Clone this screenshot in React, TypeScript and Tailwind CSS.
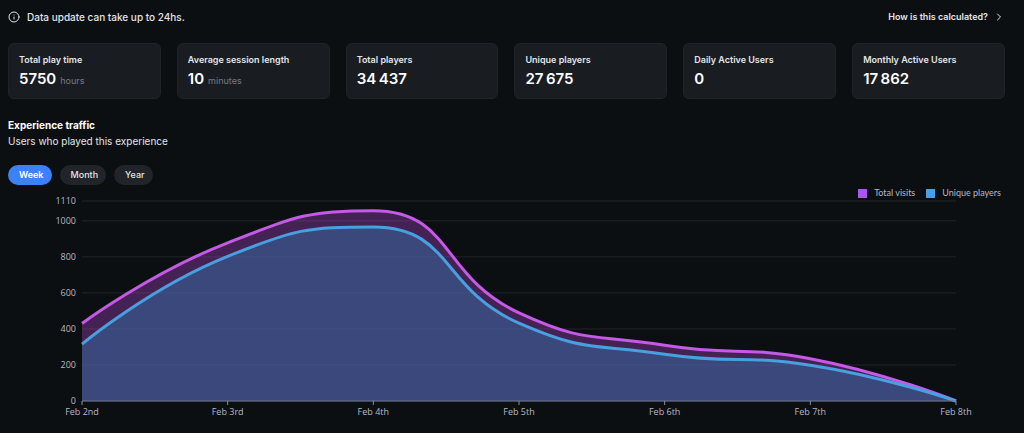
import { useState } from "react";
import { ChevronRight, Info } from "lucide-react";
import clsx from "clsx";

type Point = { x: number; y: number };

const stats = [
  { label: "Total play time", value: "5750", unit: "hours" },
  { label: "Average session length", value: "10", unit: "minutes" },
  { label: "Total players", value: "34\u2009437" },
  { label: "Unique players", value: "27\u2009675" },
  { label: "Daily Active Users", value: "0" },
  { label: "Monthly Active Users", value: "17\u2009862" },
];

const ranges = ["Week", "Month", "Year"];

const days = ["Feb 2nd", "Feb 3rd", "Feb 4th", "Feb 5th", "Feb 6th", "Feb 7th", "Feb 8th"];
const totalVisits = [430, 878, 1056, 489, 309, 235, 0];
const uniquePlayers = [316, 803, 966, 432, 260, 199, 0];

const ticks = [0, 200, 400, 600, 800, 1000, 1110];
const MAX = 1110;

const CHART = { width: 997, height: 218, left: 74, right: 948, top: 2, bottom: 202 };

const scaleX = (i: number) =>
  CHART.left + (i * (CHART.right - CHART.left)) / (days.length - 1);
const scaleY = (v: number) =>
  CHART.bottom - (v / MAX) * (CHART.bottom - CHART.top);

const clamp = (v: number, a: number, b: number) =>
  Math.max(Math.min(a, b), Math.min(Math.max(a, b), v));

// smooth line that never overshoots its neighbouring points
function smoothPath(points: Point[], smooth = 0.5) {
  let d = `M${points[0].x},${points[0].y}`;
  let c0 = points[0];

  for (let i = 1; i < points.length; i++) {
    const prev = points[i - 1];
    const p = points[i];
    const next = points[i + 1];
    if (!next) {
      d += `C${c0.x},${c0.y} ${p.x},${p.y} ${p.x},${p.y}`;
      break;
    }

    const lenPrev = Math.hypot(p.x - prev.x, p.y - prev.y);
    const lenNext = Math.hypot(next.x - p.x, next.y - p.y);
    const k = (smooth * lenNext) / (lenNext + lenPrev);

    let nx = clamp(p.x + (next.x - prev.x) * k, p.x, next.x);
    let ny = clamp(p.y + (next.y - prev.y) * k, p.y, next.y);
    const back = lenPrev / lenNext;
    const cx = clamp(p.x - (nx - p.x) * back, prev.x, p.x);
    const cy = clamp(p.y - (ny - p.y) * back, prev.y, p.y);
    nx = p.x + (p.x - cx) / back;
    ny = p.y + (p.y - cy) / back;

    d += `C${c0.x},${c0.y} ${cx},${cy} ${p.x},${p.y}`;
    c0 = { x: nx, y: ny };
  }
  return d;
}

function Series({ data, line, fill }: { data: number[]; line: string; fill: string }) {
  const path = smoothPath(data.map((v, i) => ({ x: scaleX(i), y: scaleY(v) })));
  return (
    <>
      <path
        d={`${path}L${CHART.right},${CHART.bottom}L${CHART.left},${CHART.bottom}Z`}
        className={fill}
      />
      <path d={path} fill="none" strokeWidth={3} strokeLinejoin="bevel" className={line} />
    </>
  );
}

function TrafficChart() {
  return (
    <svg
      viewBox={`0 0 ${CHART.width} ${CHART.height}`}
      className="block h-auto w-full overflow-visible font-['Open_Sans',sans-serif] text-[9px]"
      role="img"
      aria-label="Experience traffic"
    >
      {ticks.map((t) => (
        <g key={t}>
          <line
            x1={CHART.left}
            x2={CHART.right}
            y1={scaleY(t)}
            y2={scaleY(t)}
            className="stroke-[#212428]"
          />
          <text x={CHART.left - 6} y={scaleY(t) + 3} textAnchor="end" className="fill-[#b5b8c6]">
            {t}
          </text>
        </g>
      ))}
      <Series data={totalVisits} line="stroke-[#c45ae6]" fill="fill-[#c74eee]/30" />
      <Series data={uniquePlayers} line="stroke-[#48a0e0]" fill="fill-[#306ea2]/50" />
      <line
        x1={CHART.left}
        x2={CHART.right}
        y1={CHART.bottom}
        y2={CHART.bottom}
        className="stroke-[#6e7793]"
      />
      {days.map((day, i) => (
        <g key={day}>
          <line
            x1={scaleX(i)}
            x2={scaleX(i)}
            y1={CHART.bottom}
            y2={CHART.bottom + 4}
            className="stroke-[#8b8fa0]"
          />
          <text
            x={scaleX(i)}
            y={CHART.bottom + 14}
            textAnchor="middle"
            className="fill-[#b5b8c6]"
          >
            {day}
          </text>
        </g>
      ))}
    </svg>
  );
}

export default function App() {
  const [range, setRange] = useState("Week");

  return (
    <main className="min-h-screen bg-[#0c0f12] pt-[9px] pr-[19px] pb-2 pl-2 font-[Inter,sans-serif] text-[#e3e5e8]">
      <header className="flex h-4 items-center justify-between">
        <p className="flex items-center gap-[7px] text-[10px] font-medium">
          <Info className="size-3" />
          Data update can take up to 24hs.
        </p>
        <a href="#calculation" className="flex items-center gap-[5px] text-[9px] font-semibold">
          How is this calculated?
          <ChevronRight className="size-3" />
        </a>
      </header>

      <section className="mt-[18px] grid grid-cols-2 gap-4 sm:grid-cols-3 lg:grid-cols-6">
        {stats.map((stat) => (
          <div
            key={stat.label}
            className="rounded-md border border-[#20242a] bg-[#191d22] px-[10px] pt-[10px] pb-[9px]"
          >
            <h3 className="text-[9px] leading-3 font-semibold">{stat.label}</h3>
            <p className="mt-[3px] flex items-baseline gap-1 text-[15px] leading-5 font-semibold text-white">
              {stat.value}
              {stat.unit && (
                <span className="text-[9px] leading-3 font-normal text-[#777b83]">
                  {stat.unit}
                </span>
              )}
            </p>
          </div>
        ))}
      </section>

      <section className="mt-[18px]">
        <h2 className="text-[10px] leading-4 font-bold text-white">Experience traffic</h2>
        <p className="text-[10px] leading-4">Users who played this experience</p>

        <div className="mt-4 flex gap-2">
          {ranges.map((r) => (
            <button
              key={r}
              type="button"
              aria-pressed={range === r}
              onClick={() => setRange(r)}
              className={clsx(
                "h-5 cursor-pointer rounded-full pr-2 pl-[11px] text-[9px]",
                range === r ? "bg-[#3b82f6] font-semibold text-white" : "bg-[#212429] font-medium"
              )}
            >
              {r}
            </button>
          ))}
        </div>

        <ul className="mt-[2px] flex justify-end gap-[11px] pr-1 font-[Lato,sans-serif] text-[9px] leading-3 text-[#b5b8c6]">
          <li className="flex items-center gap-[7px]">
            <span className="size-[9px] bg-[#ab57ef]" />
            Total visits
          </li>
          <li className="flex items-center gap-[7px]">
            <span className="size-[9px] bg-[#4b9fe6]" />
            Unique players
          </li>
        </ul>

        <TrafficChart />
      </section>
    </main>
  );
}
